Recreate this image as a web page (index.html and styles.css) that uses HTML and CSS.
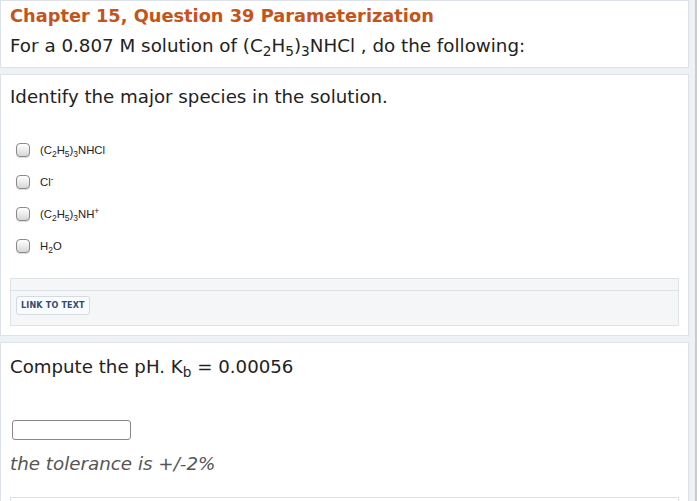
FILE: index.html
```html
<!DOCTYPE html>
<html>
<head>
<meta charset="utf-8">
<link rel="stylesheet" href="styles.css">
</head>
<body>
<div class="page">
  <div class="card head">
    <h1 class="title">Chapter 15, Question 39 Parameterization</h1>
    <p class="intro">For a 0.807 M solution of (C<sub>2</sub>H<sub>5</sub>)<sub>3</sub>NHCl , do the following:</p>
  </div>
  <div class="card part">
    <p class="prompt">Identify the major species in the solution.</p>
    <ul class="options">
      <li class="option"><span class="box"></span><span class="label">(C<sub>2</sub>H<sub>5</sub>)<sub>3</sub>NHCl</span></li>
      <li class="option"><span class="box"></span><span class="label">Cl<sup>-</sup></span></li>
      <li class="option"><span class="box"></span><span class="label">(C<sub>2</sub>H<sub>5</sub>)<sub>3</sub>NH<sup>+</sup></span></li>
      <li class="option"><span class="box"></span><span class="label">H<sub>2</sub>O</span></li>
    </ul>
    <div class="panel">
      <div class="panel-strip"></div>
      <div class="panel-body"><span class="link-btn">LINK TO TEXT</span></div>
    </div>
  </div>
  <div class="card part last">
    <p class="prompt">Compute the pH. K<sub>b</sub> = 0.00056</p>
    <div class="answer"></div>
    <p class="tolerance">the tolerance is +/-2%</p>
    <div class="next"></div>
  </div>
</div>
</body>
</html>
```

FILE: styles.css
```css
html, body {
  margin: 0;
  padding: 0;
  background: #ffffff;
}
body {
  font-family: "DejaVu Sans", Verdana, sans-serif;
  color: #222;
  overflow: hidden;
}
.page {
  width: 697px;
  height: 501px;
  box-sizing: border-box;
  background: #eef2f6;
  border-right: 2px solid #c9cbce;
  padding-right: 6px;
  display: flex;
  flex-direction: column;
  gap: 6px;
}
.card {
  background: #fff;
  border: 1px solid #dde2e8;
}
.head {
  height: 68px;
  flex: none;
  box-sizing: border-box;
  padding: 4px 9px 0;
}
.title {
  margin: 0;
  font-size: 17.8px;
  line-height: 22px;
  font-weight: bold;
  color: #c4541c;
}
.intro {
  margin: 7px 0 0;
  font-size: 18.3px;
  line-height: 24px;
}
sub, sup {
  font-size: 0.75em;
  line-height: 0;
}
sub { vertical-align: -0.3em; }
sup { vertical-align: 0.45em; }
.part {
  height: 262px;
  flex: none;
  box-sizing: border-box;
  padding: 10px 9px 0;
  display: flex;
  flex-direction: column;
}
.prompt {
  margin: 0;
  font-size: 18.2px;
  line-height: 24px;
}
.options {
  list-style: none;
  margin: 33px 0 0;
  padding: 0 0 0 6px;
  display: flex;
  flex-direction: column;
  gap: 16px;
}
.option {
  display: flex;
  align-items: center;
  gap: 10px;
  height: 16px;
  font-family: "Liberation Sans", Arial, sans-serif;
  font-size: 11.3px;
}
.box {
  width: 12px;
  height: 12px;
  border: 1px solid #8a8a8a;
  border-radius: 4px;
  background: linear-gradient(#ffffff, #d8d8d8);
  box-shadow: 0 1px 1px rgba(0,0,0,0.15);
}
.panel {
  margin-top: 24px;
  border: 1px solid #dfe3e8;
  background: #f4f6f8;
  height: 48px;
  box-sizing: border-box;
}
.panel-strip {
  height: 11px;
  border-bottom: 1px solid #dfe3e8;
}
.panel-body {
  padding: 2px 5px 0;
}
.link-btn {
  display: inline-block;
  font-family: "DejaVu Sans", Verdana, sans-serif;
  font-weight: bold;
  font-size: 8px;
  letter-spacing: 0.2px;
  color: #2f4b78;
  background: #fafbfc;
  border: 1px solid #d5dae0;
  border-radius: 3px;
  padding: 4px 4px;
}
.last {
  flex: 1;
  height: auto;
  padding-top: 12px;
  border-bottom: none;
}
.answer {
  margin-top: 41px;
  margin-left: 2px;
  width: 117px;
  height: 18px;
  border: 1px solid #888;
  border-radius: 3px;
  background: #fff;
}
.tolerance {
  margin: 12px 0 0;
  font-size: 18.3px;
  line-height: 24px;
  font-style: italic;
  color: #555;
}
.next {
  margin-top: 21px;
  height: 6px;
  border: 1px solid #dde2e8;
  border-bottom: none;
}
```
